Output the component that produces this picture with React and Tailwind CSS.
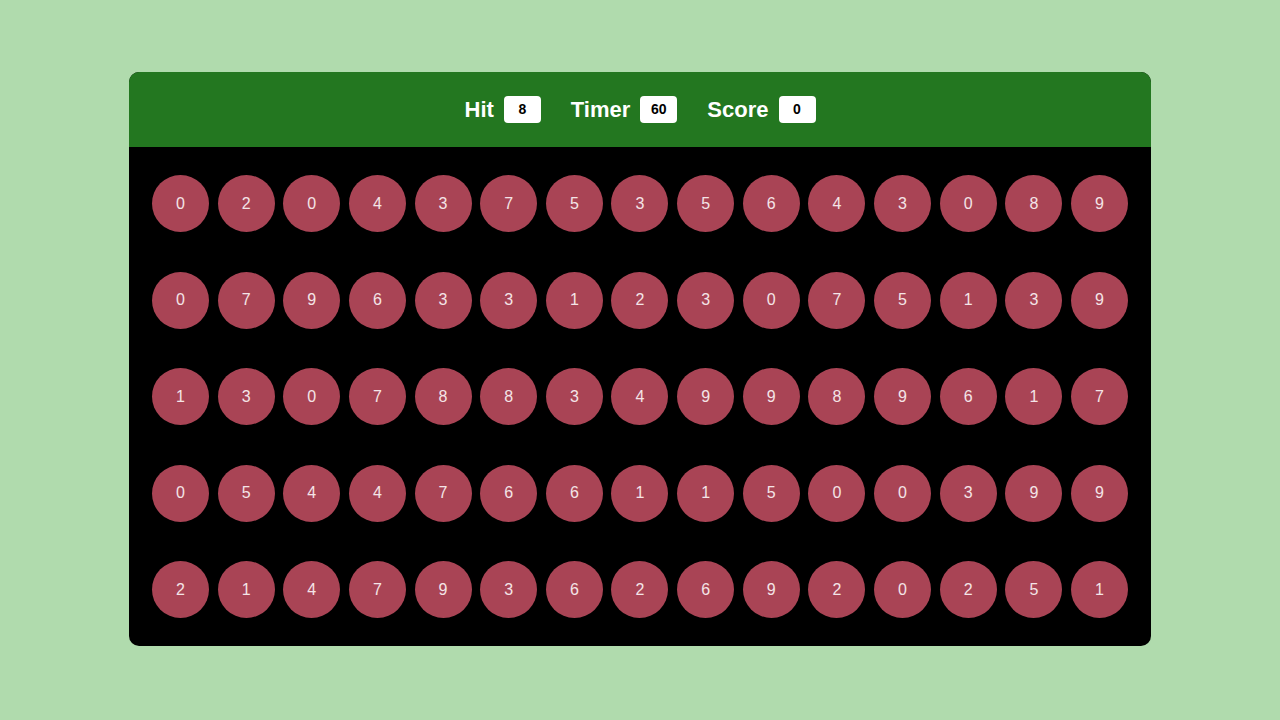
const rows = [
  [0, 2, 0, 4, 3, 7, 5, 3, 5, 6, 4, 3, 0, 8, 9],
  [0, 7, 9, 6, 3, 3, 1, 2, 3, 0, 7, 5, 1, 3, 9],
  [1, 3, 0, 7, 8, 8, 3, 4, 9, 9, 8, 9, 6, 1, 7],
  [0, 5, 4, 4, 7, 6, 6, 1, 1, 5, 0, 0, 3, 9, 9],
  [2, 1, 4, 7, 9, 3, 6, 2, 6, 9, 2, 0, 2, 5, 1],
];

const Stat = ({ label, value }) => (
  <div className="flex items-center gap-[10px]">
    <span className="text-[22px] font-bold text-white">{label}</span>
    <span className="flex h-[27px] w-[37px] items-center justify-center rounded-[4px] bg-white text-[14px] font-semibold text-black">
      {value}
    </span>
  </div>
);

export default function App() {
  return (
    <div className="flex h-screen w-full items-center justify-center bg-[#b0dbad] pb-[2px] font-['Liberation_Sans',Arial,sans-serif]">
      <div className="flex h-[574px] w-[1022px] flex-col overflow-hidden rounded-[10px] bg-black">
        <div className="flex h-[75px] items-center justify-center gap-[30px] bg-[#237720] pb-[1px]">
          <Stat label="Hit" value="8" />
          <Stat label="Timer" value="60" />
          <Stat label="Score" value="0" />
        </div>
        <div className="flex flex-1 flex-col justify-between px-[23px] pt-[28px] pb-[28px]">
          {rows.map((row, i) => (
            <div key={i} className="flex justify-between">
              {row.map((n, j) => (
                <div
                  key={j}
                  className="flex h-[57px] w-[57px] items-center justify-center rounded-full bg-[#a94455] text-[16px] text-[#f4e4e7]"
                >
                  {n}
                </div>
              ))}
            </div>
          ))}
        </div>
      </div>
    </div>
  );
}
